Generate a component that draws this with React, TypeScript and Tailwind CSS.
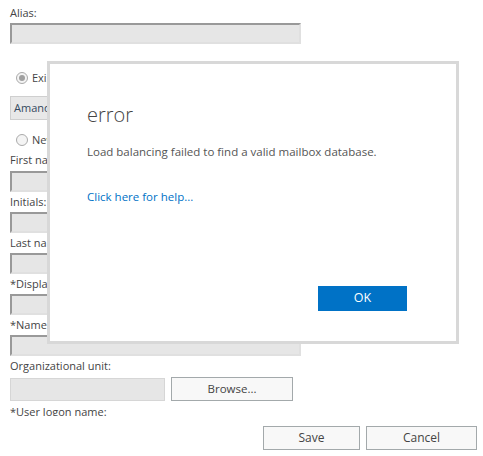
import React from "react";

const FONT = { fontFamily: '"Open Sans", "Noto Sans", sans-serif' };

function Label({ text, className = "" }: { text: string; className?: string }) {
  return (
    <div className={`h-[17px] text-[11px] leading-[17px] text-[#444] whitespace-nowrap ${className}`}>
      {text}
    </div>
  );
}

function TextBox({ className = "" }: { className?: string }) {
  return (
    <div
      className={`h-[21px] w-[291px] bg-[#e6e6e6] border-[2px] border-t-[#999] border-l-[#999] border-r-[#e0e0e0] border-b-[#e0e0e0] ${className}`}
    />
  );
}

function Radio({ checked, label }: { checked?: boolean; label: string }) {
  return (
    <div className="flex items-center gap-[4px] pl-[6px] h-[17px]">
      <span className="flex h-[12px] w-[12px] items-center justify-center rounded-full border border-[#aaa] bg-[#f4f4f4]">
        {checked && <span className="h-[6px] w-[6px] rounded-full bg-[#a0a0a0]" />}
      </span>
      <span className="text-[11px] leading-[17px] text-[#444]">{label}</span>
    </div>
  );
}

function ErrorDialog() {
  return (
    <div className="absolute left-[47px] top-[61px] h-[283px] w-[412px] border-[3px] border-[#d8d8d8] bg-white">
      <div className="flex h-full flex-col pl-[37px] pr-[49px] pt-[38px] pb-[30px]">
        <div className="text-[20px] font-light leading-[26px] text-[#444]">error</div>
        <p className="mt-[15px] text-[11.5px] leading-[17px] text-[#555] whitespace-nowrap">
          Load balancing failed to find a valid mailbox database.
        </p>
        <a className="mt-[28px] text-[11.5px] leading-[17px] text-[#0072c6] cursor-pointer">
          Click here for help...
        </a>
        <div className="mt-auto flex justify-end">
          <button className="h-[25px] w-[89px] bg-[#0072c6] text-[12.5px] text-white">OK</button>
        </div>
      </div>
    </div>
  );
}

export default function App() {
  return (
    <div className="relative h-[456px] w-[483px] overflow-hidden bg-white" style={FONT}>
      <div className="h-[416px] overflow-hidden px-[10px] pt-[4px]">
        <Label text="Alias:" />
        <TextBox className="mt-[2px]" />

        <div className="mt-[25px]">
          <Radio checked label="Existing user" />
        </div>
        <div className="mt-[10px] flex h-[24px] w-[291px] items-center border border-[#cfcfcf] bg-[#e8e8e8] px-[3px] text-[11px] text-[#34495e]">
          Amanda
        </div>
        <div className="mt-[11px]">
          <Radio label="New user" />
        </div>

        <Label text="First name:" className="mt-[3px]" />
        <TextBox className="mt-[3px]" />
        <Label text="Initials:" className="mt-[1px]" />
        <TextBox className="mt-[2px]" />
        <Label text="Last name:" className="mt-[1px]" />
        <TextBox className="mt-[2px]" />
        <Label text="*Display name:" className="mt-[1px]" />
        <TextBox className="mt-[2px]" />
        <Label text="*Name:" className="mt-[1px]" />
        <TextBox className="mt-[2px]" />

        <Label text="Organizational unit:" className="mt-[1px]" />
        <div className="mt-[3px] flex items-center gap-[6px]">
          <div className="h-[23px] w-[155px] border border-[#d6d6d6] bg-[#e6e6e6]" />
          <button className="h-[24px] w-[122px] border border-[#a3a9ab] bg-[#f8f8f8] text-[11.5px] text-[#444]">
            Browse...
          </button>
        </div>
        <Label text="*User logon name:" className="mt-[2px]" />
      </div>

      <div className="flex justify-end gap-[6px] pr-[6px] pt-[10px]">
        <button className="h-[24px] w-[97px] border border-[#a3a9ab] bg-[#f8f8f8] text-[12px] text-[#444]">
          Save
        </button>
        <button className="h-[24px] w-[111px] border border-[#a3a9ab] bg-[#f8f8f8] text-[12px] text-[#444]">
          Cancel
        </button>
      </div>

      <ErrorDialog />
    </div>
  );
}
